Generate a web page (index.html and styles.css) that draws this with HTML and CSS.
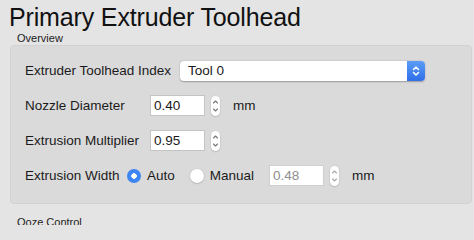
FILE: index.html
```html
<!DOCTYPE html>
<html>
<head>
<meta charset="utf-8">
<link rel="stylesheet" href="styles.css">
</head>
<body>
<div class="page">
  <h1 class="title">Primary Extruder Toolhead</h1>
  <div class="section-label">Overview</div>
  <div class="group">
    <div class="row">
      <span class="label w-index">Extruder Toolhead Index</span>
      <div class="popup">
        <span class="popup-text">Tool 0</span>
        <span class="popup-btn">
          <svg width="10" height="14" viewBox="0 0 10 14"><path d="M2.5 5.5 L5 3 L7.5 5.5 M2.5 8.5 L5 11 L7.5 8.5" fill="none" stroke="#fff" stroke-width="1.5" stroke-linecap="round" stroke-linejoin="round"/></svg>
        </span>
      </div>
    </div>
    <div class="row">
      <span class="label w-field">Nozzle Diameter</span>
      <div class="input">0.40</div>
      <span class="stepper">
        <svg width="9" height="18" viewBox="0 0 9 18"><path d="M2.5 6 L4.5 4 L6.5 6 M2.5 12 L4.5 14 L6.5 12" fill="none" stroke="#777" stroke-width="1.1" stroke-linecap="round" stroke-linejoin="round"/></svg>
      </span>
      <span class="unit">mm</span>
    </div>
    <div class="row">
      <span class="label w-field">Extrusion Multiplier</span>
      <div class="input">0.95</div>
      <span class="stepper">
        <svg width="9" height="18" viewBox="0 0 9 18"><path d="M2.5 6 L4.5 4 L6.5 6 M2.5 12 L4.5 14 L6.5 12" fill="none" stroke="#777" stroke-width="1.1" stroke-linecap="round" stroke-linejoin="round"/></svg>
      </span>
    </div>
    <div class="row">
      <span class="label w-width">Extrusion Width</span>
      <span class="radio on"></span>
      <span class="radio-text auto">Auto</span>
      <span class="radio"></span>
      <span class="radio-text manual">Manual</span>
      <div class="input disabled">0.48</div>
      <span class="stepper">
        <svg width="9" height="18" viewBox="0 0 9 18"><path d="M2.5 6 L4.5 4 L6.5 6 M2.5 12 L4.5 14 L6.5 12" fill="none" stroke="#aaa" stroke-width="1.1" stroke-linecap="round" stroke-linejoin="round"/></svg>
      </span>
      <span class="unit unit2">mm</span>
    </div>
  </div>
  <div class="section-label next">Ooze Control</div>
</div>
</body>
</html>
```
FILE: styles.css
```css
html, body {
  margin: 0;
  padding: 0;
  background: #e4e4e4;
  width: 474px;
  height: 225px;
  overflow: hidden;
  font-family: "Liberation Sans", Arial, sans-serif;
  color: #1a1a1a;
}
.page {
  display: flex;
  flex-direction: column;
}
.title {
  margin: 0;
  padding: 2px 0 0 9px;
  font-size: 25px;
  letter-spacing: -0.15px;
  font-weight: normal;
  line-height: 30px;
  height: 30px;
  color: #111;
}
.section-label {
  font-size: 11px;
  line-height: 13px;
  padding-left: 17px;
  color: #222;
}
.group {
  margin: 0 2px 0 10px;
  height: 159px;
  box-sizing: border-box;
  background: #dadada;
  border: 1px solid #d2d2d2;
  border-radius: 4px;
  padding: 14px 0 0 14px;
  display: flex;
  flex-direction: column;
  gap: 14px;
}
.row {
  display: flex;
  align-items: center;
  height: 21px;
  font-size: 13.5px;
}
.label { flex: none; }
.w-index { width: 155px; }
.w-field { width: 125px; }
.w-width { width: 102px; }
.popup {
  width: 245px;
  height: 20px;
  background: #fff;
  border-radius: 4px;
  box-shadow: 0 0.5px 1.5px rgba(0,0,0,0.3);
  display: flex;
  align-items: center;
  justify-content: space-between;
}
.popup-text { padding-left: 8px; }
.popup-btn {
  width: 18px;
  height: 20px;
  border-radius: 0 4px 4px 0;
  background: linear-gradient(#5b9cf8, #2f6fe8);
  display: flex;
  align-items: center;
  justify-content: center;
}
.input {
  width: 55px;
  height: 21px;
  box-sizing: border-box;
  background: #fff;
  border: 1px solid #c4c4c4;
  padding-left: 3px;
  line-height: 19px;
}
.input.disabled {
  color: #8e8e8e;
  border-color: #cfcfcf;
  margin-left: 15px;
}
.stepper {
  margin-left: 6px;
  width: 9px;
  height: 20px;
  background: #fff;
  border-radius: 5px;
  box-shadow: 0 0.5px 1.5px rgba(0,0,0,0.25);
  display: flex;
  align-items: center;
  justify-content: center;
}
.unit { margin-left: 13px; }
.unit2 { margin-left: 13px; }
.radio {
  width: 14px;
  height: 14px;
  box-sizing: border-box;
  border-radius: 50%;
  background: #fff;
  box-shadow: 0 0.5px 1.5px rgba(0,0,0,0.3);
  flex: none;
}
.radio.on {
  background: radial-gradient(circle, #fff 0 2.5px, #3d84f5 3px);
  box-shadow: none;
}
.radio-text { margin-left: 6px; }
.radio-text.auto { margin-right: 15px; }
.next {
  margin-top: 12px;
}
```
